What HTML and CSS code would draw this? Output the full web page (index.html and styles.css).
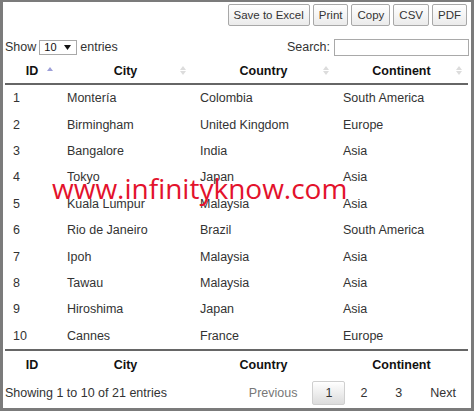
FILE: index.html
```html
<!DOCTYPE html>
<html>
<head>
<meta charset="utf-8">
<link rel="stylesheet" href="styles.css">
</head>
<body>
<div class="frame">
  <div class="toolbar">
    <button class="btn">Save to Excel</button>
    <button class="btn">Print</button>
    <button class="btn">Copy</button>
    <button class="btn">CSV</button>
    <button class="btn">PDF</button>
  </div>
  <div class="controls">
    <div class="length">Show
      <span class="select"><span class="sel-val">10</span><svg class="sel-arrow" width="7" height="5" viewBox="0 0 7 5"><path d="M0 0 L7 0 L3.5 5 Z" fill="#111"/></svg></span>
      entries</div>
    <label class="search">Search: <input class="search-input" type="text"></label>
  </div>
  <table class="grid">
    <colgroup>
      <col class="c-id"><col class="c-city"><col class="c-country"><col class="c-cont">
    </colgroup>
    <thead>
      <tr>
        <th class="sort-asc">ID<span class="icon-asc"></span></th>
        <th class="sort-both">City<span class="icon-both"><i class="up"></i><i class="down"></i></span></th>
        <th class="sort-both">Country<span class="icon-both"><i class="up"></i><i class="down"></i></span></th>
        <th class="sort-both">Continent<span class="icon-both"><i class="up"></i><i class="down"></i></span></th>
      </tr>
    </thead>
    <tbody>
      <tr><td>1</td><td>Montería</td><td>Colombia</td><td>South America</td></tr>
      <tr><td>2</td><td>Birmingham</td><td>United Kingdom</td><td>Europe</td></tr>
      <tr><td>3</td><td>Bangalore</td><td>India</td><td>Asia</td></tr>
      <tr><td>4</td><td>Tokyo</td><td>Japan</td><td>Asia</td></tr>
      <tr><td>5</td><td>Kuala Lumpur</td><td>Malaysia</td><td>Asia</td></tr>
      <tr><td>6</td><td>Rio de Janeiro</td><td>Brazil</td><td>South America</td></tr>
      <tr><td>7</td><td>Ipoh</td><td>Malaysia</td><td>Asia</td></tr>
      <tr><td>8</td><td>Tawau</td><td>Malaysia</td><td>Asia</td></tr>
      <tr><td>9</td><td>Hiroshima</td><td>Japan</td><td>Asia</td></tr>
      <tr><td>10</td><td>Cannes</td><td>France</td><td>Europe</td></tr>
    </tbody>
    <tfoot>
      <tr><th>ID</th><th>City</th><th>Country</th><th>Continent</th></tr>
    </tfoot>
  </table>
  <div class="bottom">
    <div class="info">Showing 1 to 10 of 21 entries</div>
    <div class="paginate">
      <span class="pbtn disabled">Previous</span>
      <span class="pbtn current">1</span>
      <span class="pbtn">2</span>
      <span class="pbtn">3</span>
      <span class="pbtn">Next</span>
    </div>
  </div>
  <div class="watermark">www.infinityknow.com</div>
</div>
</body>
</html>
```
FILE: styles.css
```css
html, body {
  margin: 0;
  padding: 0;
  background: #fff;
}
body {
  width: 474px;
  height: 411px;
  overflow: hidden;
  font-family: "Liberation Sans", Arial, sans-serif;
  font-size: 12.5px;
  color: #333;
}
.frame {
  position: relative;
  box-sizing: border-box;
  width: 474px;
  height: 411px;
  border: 3px solid #7b7b7b;
  border-top-width: 2px;
  padding: 0 2px 0 2px;
}
.toolbar {
  display: flex;
  justify-content: flex-end;
  gap: 3px;
  margin-top: 2px;
  padding-right: 2px;
}
.btn {
  height: 22px;
  padding: 0 5px;
  font-family: "Liberation Sans", Arial, sans-serif;
  font-size: 11.5px;
  color: #333;
  background: linear-gradient(#ffffff, #ebebeb);
  border: 1px solid #a8a8a8;
  border-radius: 2px;
}
.controls {
  display: flex;
  justify-content: space-between;
  align-items: center;
  margin-top: 12px;
  height: 18px;
}
.length {
  display: flex;
  align-items: center;
  gap: 3px;
  color: #333;
}
.select {
  display: inline-flex;
  align-items: center;
  justify-content: space-between;
  box-sizing: border-box;
  width: 38px;
  height: 15px;
  padding: 0 5px 0 4px;
  border: 1px solid #a9a9a9;
  background: #fff;
  font-size: 11px;
  color: #111;
}
.search {
  display: flex;
  align-items: center;
  gap: 4px;
  color: #333;
}
.search-input {
  box-sizing: border-box;
  width: 135px;
  height: 17px;
  margin: 0;
  border: 1px solid #a9a9a9;
  padding: 0 2px;
}
.grid {
  width: 463px;
  border-collapse: collapse;
  table-layout: fixed;
  margin-top: 2px;
}
.c-id { width: 54px; }
.c-city { width: 133px; }
.c-country { width: 143px; }
.c-cont { width: 133px; }
thead th {
  position: relative;
  height: 25px;
  padding: 0 8px;
  font-weight: bold;
  color: #111;
  text-align: center;
  border-bottom: 2px solid #666;
}
tbody td {
  height: 26.4px;
  padding: 0 8px;
  text-align: left;
  vertical-align: middle;
  color: #333;
}
tfoot th {
  height: 28px;
  padding: 0 8px;
  font-weight: bold;
  color: #111;
  text-align: center;
  border-top: 2px solid #666;
}
.icon-asc {
  position: absolute;
  right: 6px;
  top: 9px;
  width: 0;
  height: 0;
  border-left: 3px solid transparent;
  border-right: 3px solid transparent;
  border-bottom: 4px solid #9d9fd8;
}
.icon-both {
  position: absolute;
  right: 6px;
  top: 8px;
  display: flex;
  flex-direction: column;
  gap: 1px;
}
.icon-both i {
  display: block;
  width: 0;
  height: 0;
  border-left: 3px solid transparent;
  border-right: 3px solid transparent;
}
.icon-both .up { border-bottom: 4px solid #dcdcdc; }
.icon-both .down { border-top: 4px solid #dcdcdc; }
.bottom {
  display: flex;
  justify-content: space-between;
  align-items: center;
  margin-top: 1px;
  height: 26px;
}
.info {
  color: #333;
}
.paginate {
  display: flex;
  align-items: center;
}
.pbtn {
  box-sizing: border-box;
  height: 24px;
  line-height: 22px;
  padding: 0 12px;
  margin-left: 2px;
  border: 1px solid transparent;
  border-radius: 2px;
  color: #333;
}
.pbtn.disabled {
  color: #777;
}
.pbtn.current {
  border-color: #cfcfcf;
  background: linear-gradient(#ffffff, #dcdcdc);
}
.watermark {
  position: absolute;
  left: 49px;
  top: 169px;
  font-family: "Open Sans", sans-serif;
  font-size: 28px;
  line-height: 34px;
  color: #e3122c;
  white-space: nowrap;
}
```
